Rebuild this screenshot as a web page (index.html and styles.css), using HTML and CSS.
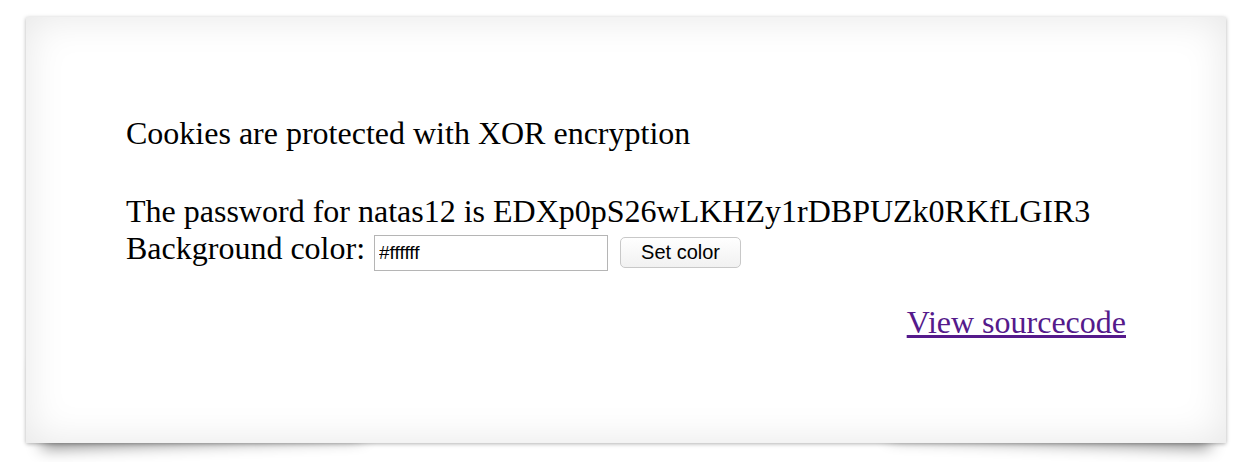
FILE: index.html
```html
<!DOCTYPE html>
<html lang="en">
<head>
<meta charset="UTF-8">
<title>natas11</title>
<link rel="stylesheet" href="styles.css">
</head>
<body>
<div class="page">
  <div class="content lifted">
    <div class="intro">Cookies are protected with XOR encryption</div>
    <div class="password">The password for natas12 is EDXp0pS26wLKHZy1rDBPUZk0RKfLGIR3</div>
    <form class="color-form">
      Background color: <input type="text" name="bgcolor" value="#ffffff">
      <input type="submit" value="Set color">
    </form>
    <div class="viewsource"><a href="index-source.html">View sourcecode</a></div>
  </div>
</div>
</body>
</html>
```

FILE: styles.css
```css
body {
  margin: 0;
  padding: 0;
  background: #fff;
  font-family: "Liberation Serif", "Times New Roman", serif;
  font-size: 32px;
  line-height: 37px;
  color: #000;
}

.page {
  position: relative;
  z-index: 0;
  padding: 17px 0 20px 26px;
}

.content {
  position: relative;
  width: 1000px;
  padding: 98px 100px 102px 100px;
  background: #fff;
  box-shadow: 0 1px 4px rgba(0, 0, 0, 0.3), 0 0 40px rgba(0, 0, 0, 0.1) inset;
}

/* curled shadow under the corners */
.lifted::before,
.lifted::after {
  content: "";
  position: absolute;
  z-index: -1;
  bottom: 16px;
  left: 14px;
  width: 50%;
  height: 20%;
  max-width: 320px;
  box-shadow: 0 16px 16px rgba(0, 0, 0, 0.45);
  transform: rotate(-2deg);
}

.lifted::after {
  right: 14px;
  left: auto;
  transform: rotate(2deg);
}

.intro {
  margin-bottom: 41px;
}

.color-form {
  margin: 0;
}

.color-form input[type="text"] {
  width: 234px;
  height: 36px;
  box-sizing: border-box;
  margin: 0 4px 0 1px;
  padding: 0 4px;
  border: 1px solid #b5b5b5;
  font-family: "Liberation Sans", Arial, sans-serif;
  font-size: 19px;
  vertical-align: baseline;
}

.color-form input[type="submit"] {
  width: 121px;
  height: 31px;
  box-sizing: border-box;
  padding: 0;
  border: 1px solid #c8c8c8;
  border-radius: 5px;
  background: linear-gradient(#ffffff, #f1f1f1);
  font-family: "Liberation Sans", Arial, sans-serif;
  font-size: 20px;
  color: #000;
  vertical-align: baseline;
}

.viewsource {
  text-align: right;
  margin-top: 33px;
}

.viewsource a {
  color: #551a8b;
}
```
